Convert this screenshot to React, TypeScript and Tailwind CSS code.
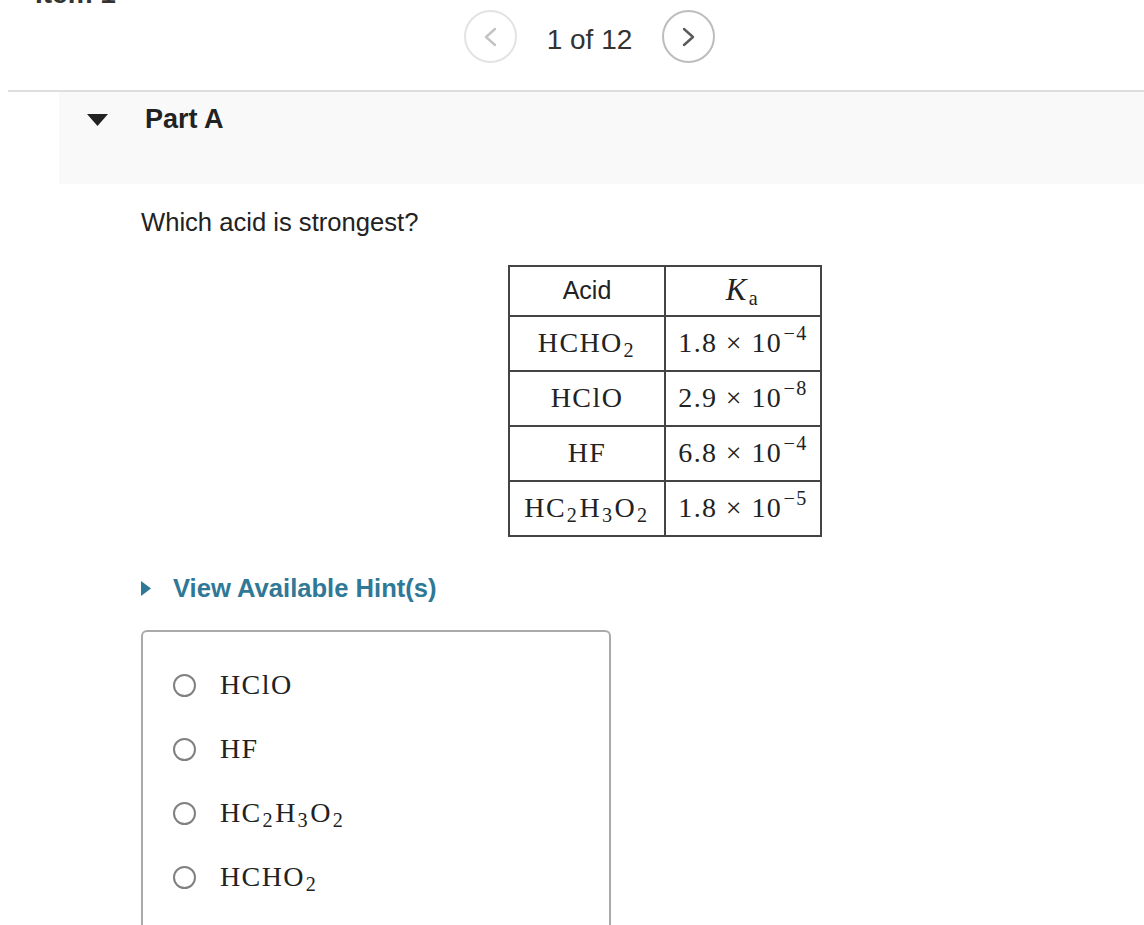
const serif = "font-['Liberation_Serif','Times_New_Roman',serif] tracking-[0.05em]";

function Sub({ children }: { children: React.ReactNode }) {
  return <span className="relative top-[0.24em] pl-[0.04em] pr-[0.06em] text-[0.72em] leading-none">{children}</span>;
}

function Sup({ children }: { children: React.ReactNode }) {
  return <span className="relative -top-[0.62em] pl-[0.06em] text-[0.72em] leading-none">{children}</span>;
}

function Ka() {
  return (
    <span className={serif}>
      <span className="text-[31px] italic">K</span>
      <Sub>a</Sub>
    </span>
  );
}

function Value({ base, exp }: { base: string; exp: string }) {
  return (
    <span className={serif}>
      {base}&nbsp;×&nbsp;10<Sup>−{exp}</Sup>
    </span>
  );
}

const rows: { acid: React.ReactNode; ka: React.ReactNode }[] = [
  { acid: <>HCHO<Sub>2</Sub></>, ka: <Value base="1.8" exp="4" /> },
  { acid: <>HClO</>, ka: <Value base="2.9" exp="8" /> },
  { acid: <>HF</>, ka: <Value base="6.8" exp="4" /> },
  { acid: <>HC<Sub>2</Sub>H<Sub>3</Sub>O<Sub>2</Sub></>, ka: <Value base="1.8" exp="5" /> },
];

const options: React.ReactNode[] = [
  <>HClO</>,
  <>HF</>,
  <>HC<Sub>2</Sub>H<Sub>3</Sub>O<Sub>2</Sub></>,
  <>HCHO<Sub>2</Sub></>,
];

function NavButton({ dir }: { dir: "prev" | "next" }) {
  const prev = dir === "prev";
  return (
    <button
      className={`flex h-[53px] w-[53px] items-center justify-center rounded-full border-2 bg-white ${
        prev ? "border-[#e3e3e3]" : "border-[#bdbdbd]"
      }`}
    >
      <svg width="16" height="20" viewBox="0 0 16 20" fill="none">
        <polyline
          points={prev ? "13,2 4,10 13,18" : "3,2 12,10 3,18"}
          stroke={prev ? "#c4c4c4" : "#5a5a5a"}
          strokeWidth="2.4"
          strokeLinecap="round"
          strokeLinejoin="round"
        />
      </svg>
    </button>
  );
}

export default function App() {
  return (
    <div className="min-h-screen bg-white font-['Liberation_Sans',Arial,sans-serif] text-[#222]">
      {/* title cut off at top edge */}
      <div className="h-[4px] overflow-hidden pl-[35px]">
        <div className="-mt-[20px] text-[28px] font-bold leading-[28px] text-[#333]">Item 1</div>
      </div>

      <div className="flex items-center justify-center gap-[30px] pl-[35px] pt-[6px]">
        <NavButton dir="prev" />
        <span className="mt-[6px] text-[28px] leading-none text-[#333]">1 of 12</span>
        <NavButton dir="next" />
      </div>

      <div className="ml-[8px] mt-[27px] h-[2px] bg-[#dedede]" />

      <div className="ml-[59px] h-[92px] bg-[#f9f9f9] pt-[14px]">
        <div className="flex items-center">
          <svg className="ml-[28px]" width="21" height="12" viewBox="0 0 21 12">
            <polygon points="0,0 21,0 10.5,12" fill="#222" />
          </svg>
          <span className="ml-[37px] text-[27px] font-bold leading-[27px] text-[#222]">Part A</span>
        </div>
      </div>

      <div className="pl-[141px]">
        <p className="mt-[26px] text-[25.6px] leading-[25.6px] text-[#222]">Which acid is strongest?</p>

        <table className="ml-[367px] mt-[29px] w-[314px] table-fixed border-collapse text-[#222]">
          <thead>
            <tr>
              <th className="h-[50px] border-2 border-[#444] text-[25px] font-normal">Acid</th>
              <th className="h-[50px] border-2 border-[#444] text-[28px] font-normal">
                <Ka />
              </th>
            </tr>
          </thead>
          <tbody>
            {rows.map((r, i) => (
              <tr key={i}>
                <td className={`h-[55px] border-2 border-[#444] text-center text-[28px] ${serif}`}>{r.acid}</td>
                <td className="h-[55px] whitespace-nowrap border-2 border-[#444] text-center text-[28px]">{r.ka}</td>
              </tr>
            ))}
          </tbody>
        </table>

        <div className="mt-[39px] flex items-center">
          <svg width="10" height="15" viewBox="0 0 10 15">
            <polygon points="0,0 10,7.5 0,15" fill="#2f7896" />
          </svg>
          <span className="ml-[22px] text-[25.6px] font-bold leading-[25.6px] text-[#2f7896]">
            View Available Hint(s)
          </span>
        </div>

        <div className="mt-[29px] h-[340px] w-[470px] rounded-t-[6px] border-2 border-b-0 border-[#aaa] pl-[30px] pt-[33px]">
          <div className="flex flex-col gap-[24px]">
            {options.map((o, i) => (
              <label key={i} className="flex h-[40px] items-center">
                <span className="h-[23px] w-[23px] rounded-full border-2 border-[#808080] bg-white" />
                <span className={`ml-[24px] text-[28px] leading-none text-[#222] ${serif}`}>{o}</span>
              </label>
            ))}
          </div>
        </div>
      </div>
    </div>
  );
}
